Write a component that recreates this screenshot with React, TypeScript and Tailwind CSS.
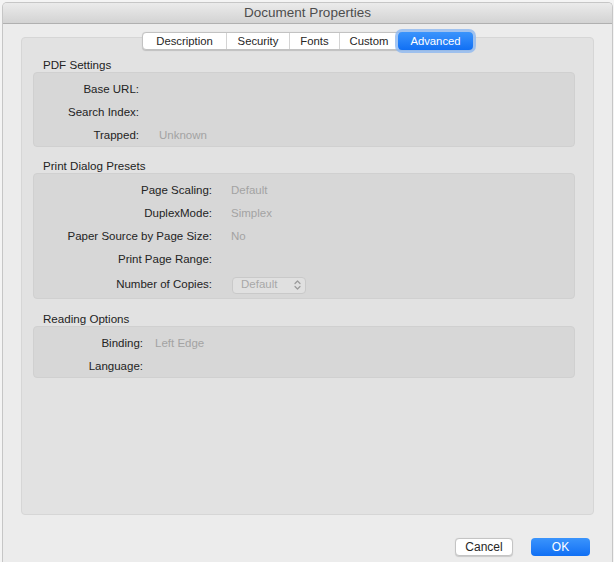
import React from "react";

const tabs = [
  { label: "Description", w: "w-[83px]" },
  { label: "Security", w: "w-[63px]" },
  { label: "Fonts", w: "w-[50px]" },
  { label: "Custom", w: "w-[59px]" },
];

function Row({ label, value, labelW, gap, children, h = "h-[23px]" }: { label: string; value?: string; labelW: string; gap: string; children?: React.ReactNode; h?: string }) {
  return (
    <div className={`flex items-center ${h}`}>
      <div className={`${labelW} text-right text-[11.5px] text-[#232323] shrink-0`}>{label}</div>
      <div className={`${gap} text-[11.5px] text-[#a3a3a3]`}>{children ?? value}</div>
    </div>
  );
}

function Section({ title, children, mt }: { title: string; children: React.ReactNode; mt: string }) {
  return (
    <div className={mt}>
      <div className="h-[14px] leading-[14px] pl-[21px] text-[11.6px] text-[#232323]">{title}</div>
      {children}
    </div>
  );
}

export default function App() {
  return (
    <div className="w-[614px] h-[562px] bg-[#f4f4f4] pl-[2px] pt-[2px] overflow-hidden font-['Liberation_Sans',Arial,sans-serif]">
      <div className="w-[611px] h-[562px] rounded-t-[5px] bg-[#ececec] border border-[#c6c6c6] border-b-0 flex flex-col overflow-hidden">
        <div className="h-[21px] shrink-0 bg-gradient-to-b from-[#ebebeb] to-[#d3d3d3] border-b border-[#b0b0b0] text-center text-[13.5px] leading-[20px] text-[#4d4d4d]">
          Document Properties
        </div>
        <div className="pl-[18px] pt-[7px] flex flex-col">
          <div className="relative z-10 flex justify-center w-[573px] h-[20px] items-center">
            <div className="flex h-[18px] rounded-[4px] border border-[#c2c2c2] bg-white shadow-[0_0.5px_1px_rgba(0,0,0,0.15)]">
              {tabs.map((t, i) => (
                <div
                  key={t.label}
                  className={`${t.w} flex items-center justify-center text-[11.3px] text-[#262626] ${i > 0 ? "border-l border-[#d4d4d4]" : ""}`}
                >
                  {t.label}
                </div>
              ))}
              <div className="w-[75px] -my-[1px] -mr-[1px] flex items-center justify-center rounded-[4px] bg-gradient-to-b from-[#3a94fc] to-[#0f6ff4] text-white text-[11.3px] ring-[3px] ring-[#8db8f0]/80">
                Advanced
              </div>
            </div>
          </div>
          <div className="-mt-[14px] w-[573px] h-[478px] rounded-[4px] border border-[#d6d6d6] bg-[#e2e2e2] pt-[20px]">
            <Section title="PDF Settings" mt="">
              <div className="ml-[11px] w-[542px] h-[75px] rounded-[4px] border border-[#d0d0d0] bg-[#d7d7d7] pt-[5px]">
                <Row label="Base URL:" labelW="w-[105px]" gap="ml-[20px]" />
                <Row label="Search Index:" labelW="w-[105px]" gap="ml-[20px]" />
                <Row label="Trapped:" labelW="w-[105px]" gap="ml-[20px]" value="Unknown" />
              </div>
            </Section>
            <Section title="Print Dialog Presets" mt="mt-[12px]">
              <div className="ml-[11px] w-[542px] h-[126px] rounded-[4px] border border-[#d0d0d0] bg-[#d7d7d7] pt-[5px]">
                <Row label="Page Scaling:" labelW="w-[178px]" gap="ml-[19px]" value="Default" />
                <Row label="DuplexMode:" labelW="w-[178px]" gap="ml-[19px]" value="Simplex" />
                <Row label="Paper Source by Page Size:" labelW="w-[178px]" gap="ml-[19px]" value="No" />
                <Row label="Print Page Range:" labelW="w-[178px]" gap="ml-[19px]" />
                <Row label="Number of Copies:" labelW="w-[178px]" gap="ml-[20px]" h="h-[28px]">
                  <div className="w-[74px] h-[17px] rounded-[4px] border border-[#c9c9c9] bg-[#e0e0e0] flex items-center justify-between pl-[8px] pr-[4px] text-[#a8a8a8]">
                    <span>Default</span>
                    <svg width="7" height="10" viewBox="0 0 7 10" fill="none" stroke="#9a9a9a" strokeWidth="1.2" strokeLinecap="round" strokeLinejoin="round">
                      <path d="M1 3.5 L3.5 1 L6 3.5" />
                      <path d="M1 6.5 L3.5 9 L6 6.5" />
                    </svg>
                  </div>
                </Row>
              </div>
            </Section>
            <Section title="Reading Options" mt="mt-[13px]">
              <div className="ml-[11px] w-[542px] h-[52px] rounded-[4px] border border-[#d0d0d0] bg-[#d7d7d7] pt-[5px]">
                <Row label="Binding:" labelW="w-[109px]" gap="ml-[12px]" value="Left Edge" />
                <Row label="Language:" labelW="w-[109px]" gap="ml-[12px]" />
              </div>
            </Section>
          </div>
          <div className="flex justify-end gap-[18px] w-[569px] mt-[23px]">
            <div className="w-[58px] h-[18px] rounded-[4px] border border-[#c4c4c4] bg-white shadow-[0_0.5px_1px_rgba(0,0,0,0.15)] flex items-center justify-center text-[12px] text-[#262626]">
              Cancel
            </div>
            <div className="w-[59px] h-[18px] rounded-[4px] bg-gradient-to-b from-[#3a94fc] to-[#0f6ff4] flex items-center justify-center text-[12px] text-white">
              OK
            </div>
          </div>
        </div>
      </div>
    </div>
  );
}
